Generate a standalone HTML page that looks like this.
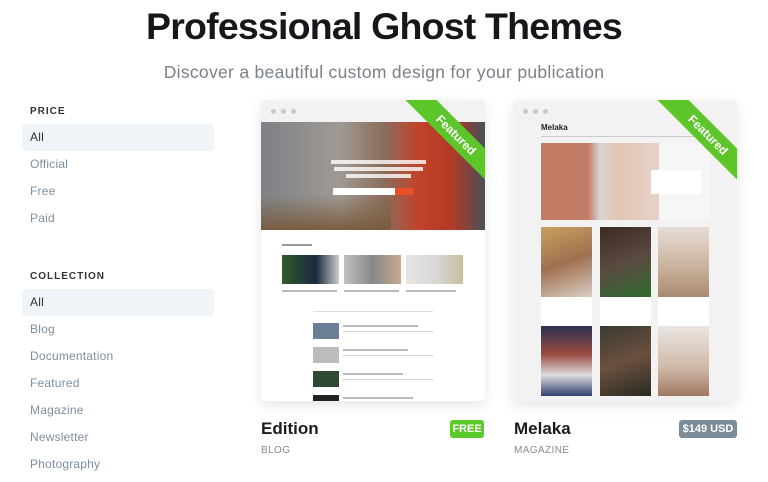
<!DOCTYPE html>
<html><head><meta charset="utf-8"><style>
*{margin:0;padding:0;box-sizing:border-box}
body{width:768px;height:482px;overflow:hidden;background:#fff;font-family:"Liberation Sans",sans-serif;position:relative}
.a{position:absolute}
h1{position:absolute;left:0;width:768px;top:5px;text-align:center;font-size:37.5px;font-weight:bold;color:#15171a;letter-spacing:-0.8px}
.sub{left:0;width:768px;top:62px;text-align:center;font-size:17.5px;color:#7a8088;letter-spacing:0.3px}
.hd{left:30px;font-size:10px;font-weight:bold;letter-spacing:1px;color:#333}
.it{left:30px;font-size:12px;color:#7d8ea0;letter-spacing:0.2px}
.sel{left:22px;width:192px;height:27px;background:#eff4f8;border-radius:4px}
.card{background:#f2f2f2;border-radius:5px;box-shadow:0 4px 14px rgba(0,0,0,.10);overflow:hidden}
.dot{width:5px;height:5px;border-radius:50%;background:#c9c9c9;top:9px}
.rib{width:130px;height:22px;background:#5cc52a;color:#fff;font-size:12px;font-weight:bold;text-align:center;line-height:22px;transform:rotate(45deg);right:-36px;top:24px}
.ln{height:2px;background:#bbb}
.nm{font-size:17px;font-weight:bold;color:#1c1c1c;top:419px}
.cat{font-size:10px;color:#8a8a8a;top:445px;letter-spacing:0.4px}
.bd{top:420px;height:18px;border-radius:3px;color:#fff;font-size:11px;font-weight:bold;text-align:center;line-height:18px}
</style></head><body>
<h1>Professional Ghost Themes</h1>
<div class="a sub">Discover a beautiful custom design for your publication</div>

<div class="a hd" style="top:106px">PRICE</div>
<div class="a sel" style="top:124px"></div>
<div class="a it" style="top:130px;color:#333">All</div>
<div class="a it" style="top:157px">Official</div>
<div class="a it" style="top:184px">Free</div>
<div class="a it" style="top:211px">Paid</div>
<div class="a hd" style="top:271px">COLLECTION</div>
<div class="a sel" style="top:289px"></div>
<div class="a it" style="top:295px;color:#333">All</div>
<div class="a it" style="top:322px">Blog</div>
<div class="a it" style="top:349px">Documentation</div>
<div class="a it" style="top:376px">Featured</div>
<div class="a it" style="top:403px">Magazine</div>
<div class="a it" style="top:430px">Newsletter</div>
<div class="a it" style="top:457px">Photography</div>

<!-- Edition card -->
<div class="a card" style="left:261px;top:100px;width:224px;height:301px">
 <div class="a dot" style="left:10px"></div><div class="a dot" style="left:20px"></div><div class="a dot" style="left:30px"></div>
 <div class="a" style="left:0;top:22px;width:224px;height:279px;background:#fff"></div>
 <div class="a" style="left:0;top:22px;width:224px;height:108px;background:linear-gradient(90deg,#7d8186 0%,#a09a94 35%,#8a6d5c 55%,#c2432a 70%,#b33a25 85%,#4a4f58 100%)"></div>
 <div class="a" style="left:0;top:95px;width:130px;height:35px;background:linear-gradient(180deg,rgba(140,110,80,0) ,#7a5d40)"></div>
 <div class="a" style="left:70px;top:60px;width:95px;height:4px;background:rgba(255,255,255,.8)"></div>
 <div class="a" style="left:73px;top:67px;width:89px;height:4px;background:rgba(255,255,255,.8)"></div>
 <div class="a" style="left:85px;top:74px;width:65px;height:4px;background:rgba(255,255,255,.8)"></div>
 <div class="a" style="left:72px;top:88px;width:62px;height:7px;background:#fff"></div>
 <div class="a" style="left:134px;top:88px;width:18px;height:7px;background:#e8502a"></div>
 <div class="a" style="left:21px;top:144px;width:30px;height:2px;background:#999"></div>
 <div class="a" style="left:21px;top:155px;width:57px;height:29px;background:linear-gradient(90deg,#2f5a2a,#1a2a40 60%,#ccc)"></div>
 <div class="a" style="left:83px;top:155px;width:57px;height:29px;background:linear-gradient(90deg,#bfc2c0,#888 50%,#c9a890)"></div>
 <div class="a" style="left:145px;top:155px;width:57px;height:29px;background:linear-gradient(90deg,#e8e6e2,#d8d8d8 50%,#c9c0a0)"></div>
 <div class="a ln" style="left:21px;top:190px;width:55px"></div>
 <div class="a ln" style="left:83px;top:190px;width:55px"></div>
 <div class="a ln" style="left:145px;top:190px;width:50px"></div>
 <div class="a" style="left:52px;top:211px;width:120px;height:1px;background:#ddd"></div>
 <div class="a" style="left:52px;top:223px;width:26px;height:16px;background:#6a7f95"></div>
 <div class="a ln" style="left:82px;top:225px;width:75px"></div><div class="a" style="left:82px;top:231px;width:90px;height:1px;background:#ccc"></div>
 <div class="a" style="left:52px;top:247px;width:26px;height:16px;background:#bcbcbc"></div>
 <div class="a ln" style="left:82px;top:249px;width:65px"></div><div class="a" style="left:82px;top:255px;width:90px;height:1px;background:#ccc"></div>
 <div class="a" style="left:52px;top:271px;width:26px;height:16px;background:#2d4a30"></div>
 <div class="a ln" style="left:82px;top:273px;width:60px"></div><div class="a" style="left:82px;top:279px;width:90px;height:1px;background:#ccc"></div>
 <div class="a" style="left:52px;top:295px;width:26px;height:6px;background:#222"></div>
 <div class="a ln" style="left:82px;top:297px;width:70px"></div>
 <div class="a rib">Featured</div>
</div>

<!-- Melaka card -->
<div class="a card" style="left:513px;top:100px;width:224px;height:302px">
 <div class="a dot" style="left:10px"></div><div class="a dot" style="left:20px"></div><div class="a dot" style="left:30px"></div>
 <div class="a" style="left:28px;top:23px;font-size:8px;font-weight:bold;color:#222">Melaka</div>
 <div class="a" style="left:28px;top:36px;width:168px;height:1px;background:#ccc"></div>
 <div class="a" style="left:28px;top:43px;width:118px;height:77px;background:linear-gradient(90deg,#c27c66 0%,#c27c66 40%,#d8d6d2 50%,#e4c5b4 65%,#e6d2c8 100%)"></div>
 <div class="a" style="left:146px;top:43px;width:50px;height:77px;background:#f6f6f6"></div>
 <div class="a" style="left:138px;top:70px;width:50px;height:24px;background:#fff"></div>
 <div class="a" style="left:28px;top:127px;width:51px;height:70px;background:linear-gradient(160deg,#c9a060,#a07050 50%,#d8cfc4)"></div>
 <div class="a" style="left:87px;top:127px;width:51px;height:70px;background:linear-gradient(160deg,#3a2a20,#5a4a40 50%,#2f6a30)"></div>
 <div class="a" style="left:145px;top:127px;width:51px;height:70px;background:linear-gradient(180deg,#e6ddd5,#c8b09a 60%,#a88a70)"></div>
 <div class="a" style="left:28px;top:197px;width:51px;height:31px;background:#fff"></div>
 <div class="a" style="left:87px;top:197px;width:51px;height:31px;background:#fff"></div>
 <div class="a" style="left:145px;top:197px;width:51px;height:31px;background:#fff"></div>
 <div class="a" style="left:28px;top:226px;width:51px;height:70px;background:linear-gradient(180deg,#2a3050,#9a4a40 40%,#ddd 70%,#304070)"></div>
 <div class="a" style="left:87px;top:226px;width:51px;height:70px;background:linear-gradient(160deg,#3a3a30,#6a5040 50%,#2a2a20)"></div>
 <div class="a" style="left:145px;top:226px;width:51px;height:70px;background:linear-gradient(180deg,#ebe6e2,#d0b8a8 60%,#a07860)"></div>
 <div class="a rib">Featured</div>
</div>

<div class="a nm" style="left:261px">Edition</div>
<div class="a bd" style="left:450px;width:34px;background:#5ac92a">FREE</div>
<div class="a cat" style="left:261px">BLOG</div>
<div class="a nm" style="left:514px">Melaka</div>
<div class="a bd" style="left:679px;width:58px;background:#7b8b98">$149 USD</div>
<div class="a cat" style="left:514px">MAGAZINE</div>
</body></html>
